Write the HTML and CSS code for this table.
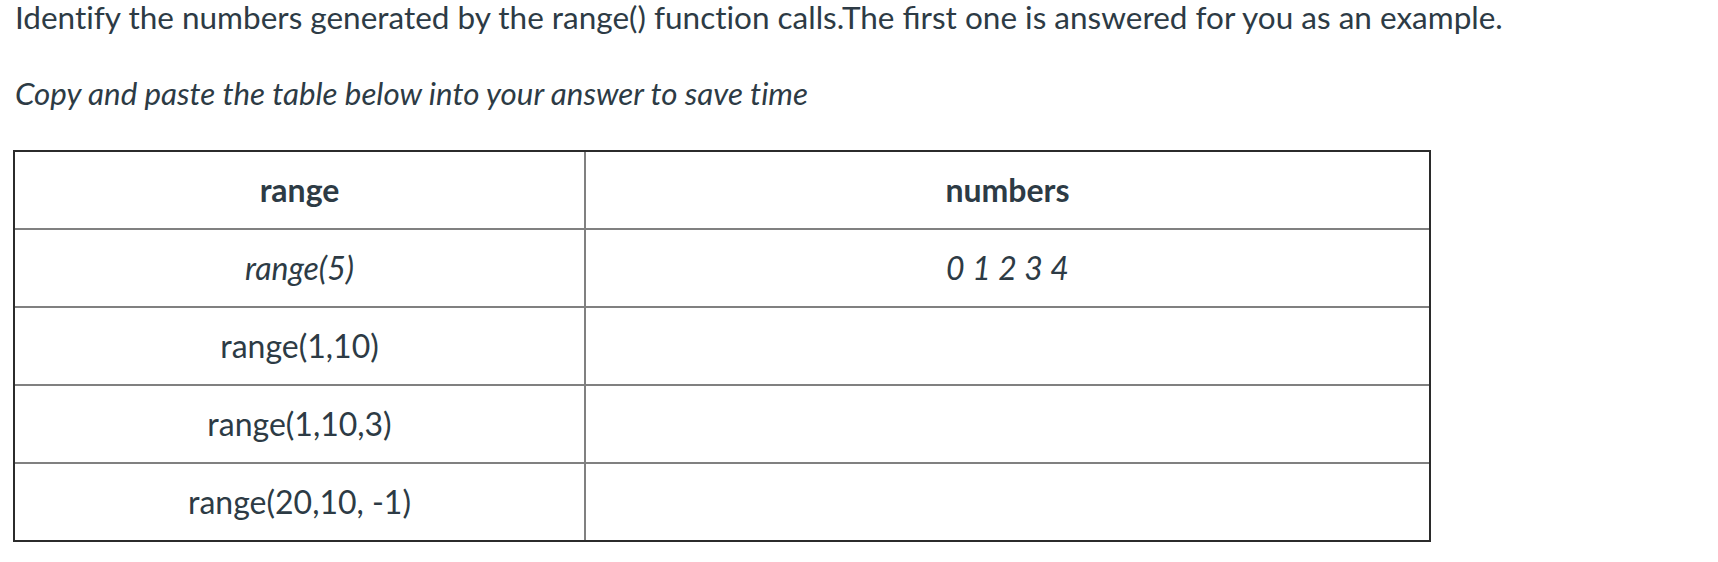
FILE: index.html
```html
<!DOCTYPE html>
<html lang="en">
<head>
<meta charset="utf-8">
<title>range() question</title>
<link rel="stylesheet" href="styles.css">
</head>
<body>
<div class="question">
  <p class="prompt">Identify the numbers generated by the range() function calls.The <span class="lig">first</span> one is answered for you as an example.</p>
  <p class="hint"><em>Copy and paste the table below into your answer to save time</em></p>
  <table class="answers">
    <thead>
      <tr><th class="col-range">range</th><th>numbers</th></tr>
    </thead>
    <tbody>
      <tr><td><em>range(5)</em></td><td><em>0&nbsp;1&nbsp;2&nbsp;3&nbsp;4</em></td></tr>
      <tr><td>range(1,10)</td><td></td></tr>
      <tr><td>range(1,10,3)</td><td></td></tr>
      <tr><td>range(20,10, -1)</td><td></td></tr>
    </tbody>
  </table>
</div>
</body>
</html>
```

FILE: styles.css
```css
html, body {
  margin: 0;
  padding: 0;
  background: #ffffff;
}

body {
  font-family: Lato, "Noto Sans", sans-serif;
  font-size: 31.5px;
  line-height: 1.1;
  color: #2d3b45;
  font-variant-ligatures: no-common-ligatures;
}

.lig {
  font-variant-ligatures: common-ligatures;
}

.question {
  padding: 0 0 0 13px;
}

.prompt {
  margin: 0 0 0 2px;
}

.hint {
  margin: 41px 0 0 2px;
  font-size: 31.3px;
}

.hint em {
  font-style: italic;
}

.answers {
  margin-top: 40px;
  width: 1418px;
  border: 2px solid #2b2b2b;
  border-collapse: separate;
  border-spacing: 0;
  table-layout: fixed;
  font-size: 32px;
  line-height: 1.1;
}

.answers th,
.answers td {
  height: 78px;
  padding: 0 8px;
  text-align: center;
  vertical-align: middle;
  border-right: 2px solid #808080;
  border-bottom: 2px solid #808080;
  box-sizing: border-box;
}

.answers th {
  font-weight: 700;
}

.answers .col-range {
  width: 571px;
}

.answers tr > :last-child {
  border-right: none;
}

.answers tbody tr:last-child > * {
  border-bottom: none;
  height: 76px;
}
```
